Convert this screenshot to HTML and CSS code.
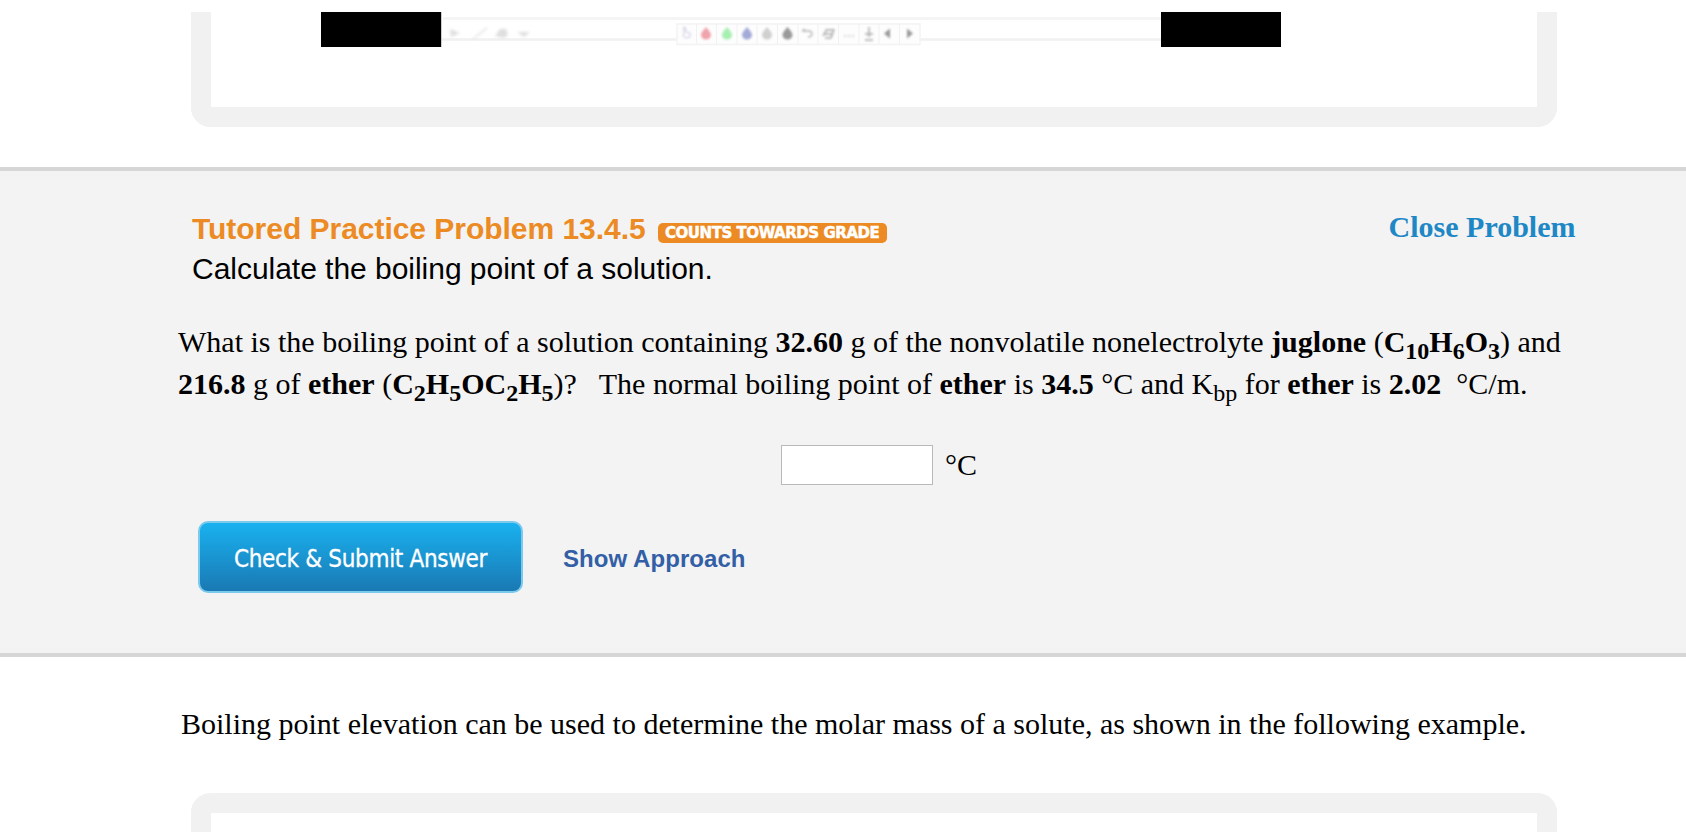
FILE: index.html
```
<!DOCTYPE html>
<html lang="en">
<head>
  <meta charset="UTF-8" />
  <meta name="viewport" content="width=device-width, initial-scale=1.0" />
  <title>Tutored Practice Problem 13.4.5</title>
  <link rel="stylesheet" href="styles.css">
</head>
<body>
  <!-- Video frame, scrolled so only the bottom shows -->
  <section class="frame frame-top">
    <div class="video">
      <div class="bar"></div>
      <svg class="toolbar" width="720" height="35" viewBox="441 12 720 35">
        <path d="M443 18.5H1161" stroke="#f5f5f5" stroke-width="3"/>
        <path d="M441 39.5H677M920 39.5H1161" stroke="#f1f1f1" stroke-width="2.5"/>
        <path d="M441.5 12V47" stroke="#ccc"/>
        <g class="soft softer" fill="#dedede">
          <path d="M450 29l10 4-9 4z"/>
          <path d="M473 39l14-11" stroke="#e8e8e8" stroke-width="2"/>
          <path d="M495 36l5-7h6l2 6-4 3z"/>
          <path d="M517 32h13l-6 5z"/>
        </g>
        <path d="M677 24H920V44.500H677Z" fill="#fdfdfd" stroke="#f3f3f3" stroke-width="1.500"/>
        <path d="M696.500 24v20M716.500 24v20M737 24v20M757 24v20M777.500 24v20M798 24v20M818 24v20M838.500 24v20M859 24v20M879 24v20M899.500 24v20" stroke="#f1f1f1"/>
        <g class="soft">
          <path d="M684 27v7l-1 2 3 2 4-1v-4l-4-1-1-5z" fill="none" stroke="#c9c7df"/>
          <path d="M706 27c2 3 5 5 5 8a5 4.500 0 0 1-10 0c0-3 3-5 5-8z" fill="#f0a3ac"/>
          <path d="M727 27c2 3 5 5 5 8a5 4.500 0 0 1-10 0c0-3 3-5 5-8z" fill="#a6efb1"/>
          <path d="M747 27c2 3 5 5 5 8a5 4.500 0 0 1-10 0c0-3 3-5 5-8z" fill="#a3aad8"/>
          <path d="M767 27c2 3 5 5 5 8a5 4.500 0 0 1-10 0c0-3 3-5 5-8z" fill="#d0d0d0"/>
          <path d="M787.500 27c2 3 5 5 5 8a5 4.500 0 0 1-10 0c0-3 3-5 5-8z" fill="#999"/>
          <path d="M803 31h6c4 0 4 6-1 6M805 29l-3 2" fill="none" stroke="#b5b5b5" stroke-width="1.500"/>
          <path d="M826 30h8M824 34h8M825 38h6M823 36l4-7M831 38l3-9" fill="none" stroke="#aaa" stroke-width="1.500"/>
          <path d="M844 36h10" stroke="#ccc" stroke-width="1.500" stroke-dasharray="2"/>
          <path d="M869 27v10M865 34h8M865 40h8" fill="none" stroke="#aaa" stroke-width="1.500"/>
          <path d="M890 28.500v10l-6-5zM907 28.500v10l6-5z" fill="#999"/>
        </g>
      </svg>
      <div class="bar"></div>
    </div>
  </section>

  <!-- Practice problem -->
  <section class="problem">
    <div class="problem-header">
      <div>
        <div class="title-row">
          <h2 class="problem-title">Tutored Practice Problem 13.4.5</h2>
          <span class="badge">COUNTS TOWARDS GRADE</span>
        </div>
        <div class="subtitle">Calculate the boiling point of a solution.</div>
      </div>
      <a class="close-link">Close Problem</a>
    </div>

    <div class="question">
      <div>What is the boiling point of a solution containing <b>32.60</b> g of the nonvolatile nonelectrolyte <b>juglone</b> (<b>C<sub>10</sub>H<sub>6</sub>O<sub>3</sub></b>) and</div>
      <div><b>216.8</b> g of <b>ether</b> (<b>C<sub>2</sub>H<sub>5</sub>OC<sub>2</sub>H<sub>5</sub></b>)? &nbsp; The normal boiling point of <b>ether</b> is <b>34.5</b> °C and K<sub>bp</sub> for <b>ether</b> is <b>2.02</b> &nbsp;°C/m.</div>
    </div>

    <div class="answer">
      <input class="answer-input" type="text">
      <span>°C</span>
    </div>

    <div class="actions">
      <button class="submit">Check &amp; Submit Answer</button>
      <a class="approach">Show Approach</a>
    </div>
  </section>

  <p class="text">Boiling point elevation can be used to determine the molar mass of a solute, as shown in the following example.</p>

  <section class="frame frame-bottom"></section>
</body>
</html>
```
FILE: styles.css
```
/* Reset and Base Styles */
* {
  box-sizing: border-box;
  margin: 0;
  padding: 0;
}
body {
  background: #fff;
  color: #000;
  font-family: "Liberation Serif", "Times New Roman", serif;
  font-size: 30px;
  padding-top: 12px;
}

/* Video frames */
.frame {
  width: 1366px;
  margin-left: 191px;
  border: 20px solid #f1f1f1;
}
.frame-top {
  height: 115px;
  border-top: 0;
  border-radius: 0 0 20px 20px;
}
.frame-bottom {
  height: 39px;
  border-bottom: 0;
  border-radius: 20px 20px 0 0;
}
.video {
  display: flex;
  width: 960px;
  height: 35px;
  margin-left: 110px;
}
.bar {
  width: 120px;
  background: #000;
}
.toolbar {
  display: block;
}
.soft {
  filter: blur(0.9px);
}
.softer {
  filter: blur(1.8px);
}

/* Practice problem */
.problem {
  height: 490px;
  margin-top: 40px;
  padding: 37px 0 0 178px;
  background: #f3f3f3;
  border-top: 4px solid #d6d6d6;
  border-bottom: 4px solid #d6d6d6;
}
.problem-header {
  display: flex;
  justify-content: space-between;
  width: 1397.500px;
  height: 113px;
  padding-left: 14px;
}
.title-row {
  display: flex;
  align-items: flex-start;
  gap: 12px;
  height: 41px;
}
.problem-title {
  color: #ec8a23;
  font: bold 30px/42px "Liberation Sans", Arial, sans-serif;
  letter-spacing: -0.03px;
}
.badge {
  width: 229px;
  height: 20px;
  margin-top: 15px;
  border-radius: 5px;
  background: #ec8a23;
  color: #fff;
  font: bold 15px/21px "DejaVu Sans", Verdana, sans-serif;
  letter-spacing: -0.45px;
  text-align: center;
  white-space: nowrap;
  -webkit-text-stroke: 0.5px #fff;
}
.subtitle {
  font: 30px/40px "Liberation Sans", Arial, sans-serif;
  letter-spacing: -0.03px;
}
.close-link {
  color: #1e87c5;
  font-weight: bold;
  line-height: 38px;
}
.question {
  height: 84px;
  line-height: 42px;
  white-space: nowrap;
}
.question sub {
  line-height: 0;
  font-size: 24px;
}
.answer {
  display: flex;
  align-items: center;
  gap: 12px;
  height: 40px;
  margin: 40px 0 0 603px;
}
.answer-input {
  width: 152px;
  height: 40px;
  border: 1px solid #b9b9b9;
  background: #fff;
}
.actions {
  display: flex;
  align-items: center;
  gap: 40px;
  margin: 36px 0 0 20px;
}
.submit {
  width: 325px;
  height: 72px;
  padding-top: 4px;
  border: 2px solid #7cc9ee;
  border-radius: 10px;
  background: linear-gradient(#19b1ef, #1a79b3);
  color: #fff;
  font: 24px "DejaVu Sans Condensed", "DejaVu Sans", Tahoma, sans-serif;
  letter-spacing: -0.33px;
  white-space: nowrap;
  -webkit-text-stroke: 0.3px #fff;
}
.approach {
  padding-top: 4px;
  color: #325fa5;
  font: bold 24px "Liberation Sans", Arial, sans-serif;
  letter-spacing: 0.06px;
}

.text {
  height: 136px;
  padding: 50px 0 0 181px;
  line-height: 34px;
  white-space: nowrap;
}
```
